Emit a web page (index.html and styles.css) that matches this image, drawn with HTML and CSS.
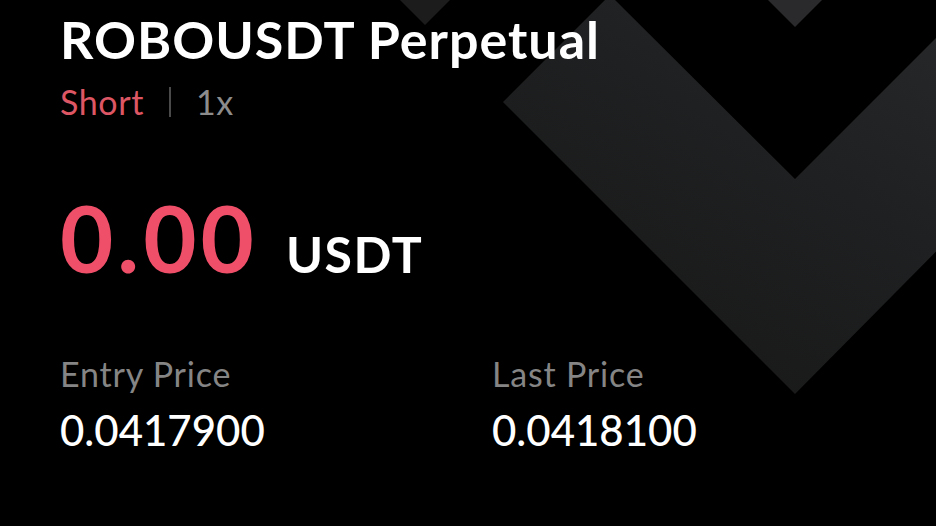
FILE: index.html
```html
<!DOCTYPE html>
<html lang="en">
<head>
  <meta charset="UTF-8">
  <meta name="viewport" content="width=device-width, initial-scale=1.0">
  <title>ROBOUSDT Perpetual</title>
  <link rel="stylesheet" href="styles.css">
</head>
<body>
  <!-- Background chevrons -->
  <svg class="backdrop" width="936" height="526" viewBox="0 0 936 526" aria-hidden="true">
    <defs>
      <linearGradient id="chevron-fill" x1="1" y1="0" x2="0" y2="1">
        <stop offset="0" stop-color="#2c2d2f"/>
        <stop offset="0.5" stop-color="#1f2021"/>
        <stop offset="1" stop-color="#161616"/>
      </linearGradient>
    </defs>
    <polygon points="400,0 450,0 425,25" fill="#1c1c1d"/>
    <polygon points="768,0 822,0 795,27" fill="#2a2a2c"/>
    <polygon points="503,102 610,-5 795,179 979,-5 1190,-5 795,394" fill="url(#chevron-fill)"/>
  </svg>

  <!-- Position card -->
  <main class="position">
    <h1 class="symbol">ROBOUSDT Perpetual</h1>
    <div class="side">
      <span class="side-short">Short</span>
      <span class="divider"></span>
      <span class="leverage">1x</span>
    </div>

    <div class="pnl">
      <span class="pnl-value">0.00</span>
      <span class="pnl-unit">USDT</span>
    </div>

    <div class="prices">
      <div class="price">
        <span class="price-label">Entry Price</span>
        <span class="price-value">0.0417900</span>
      </div>
      <div class="price">
        <span class="price-label">Last Price</span>
        <span class="price-value">0.0418100</span>
      </div>
    </div>
  </main>
</body>
</html>
```

FILE: styles.css
```css
body {
  margin: 0;
  padding: 0;
  width: 936px;
  height: 526px;
  overflow: hidden;
  background-color: #000;
  color: #fff;
  font-family: 'Lato', 'Noto Sans', sans-serif;
  position: relative;
}

.backdrop {
  position: absolute;
  top: 0;
  left: 0;
}

.position {
  position: relative;
  padding: 8px 0 0 60px;
  display: flex;
  flex-direction: column;
}

.symbol {
  margin: 0;
  font-size: 52px;
  font-weight: 700;
  line-height: 62px;
  letter-spacing: 1px;
}

.side {
  display: flex;
  align-items: center;
  gap: 25px;
  margin-top: 12px;
  font-size: 34px;
  font-weight: 400;
  line-height: 40px;
  letter-spacing: 0.6px;
}

.side-short {
  color: #dc5664;
}

.divider {
  width: 2px;
  height: 30px;
  background-color: #4a4a4a;
}

.leverage {
  color: #8c8c8c;
}

.pnl {
  display: flex;
  align-items: baseline;
  gap: 28px;
  margin-top: 66px;
}

.pnl-value {
  color: #f04f69;
  font-size: 92px;
  font-weight: 700;
  line-height: 100px;
  letter-spacing: 4px;
}

.pnl-unit {
  font-size: 50px;
  font-weight: 700;
  letter-spacing: 1.5px;
}

.prices {
  display: grid;
  grid-template-columns: 432px 1fr;
  margin-top: 66px;
}

.price {
  display: flex;
  flex-direction: column;
  gap: 12px;
}

.price-label {
  color: #858585;
  font-size: 34px;
  font-weight: 400;
  line-height: 40px;
  letter-spacing: 0.8px;
}

.price-value {
  font-size: 42px;
  font-weight: 500;
  line-height: 48px;
}
```
